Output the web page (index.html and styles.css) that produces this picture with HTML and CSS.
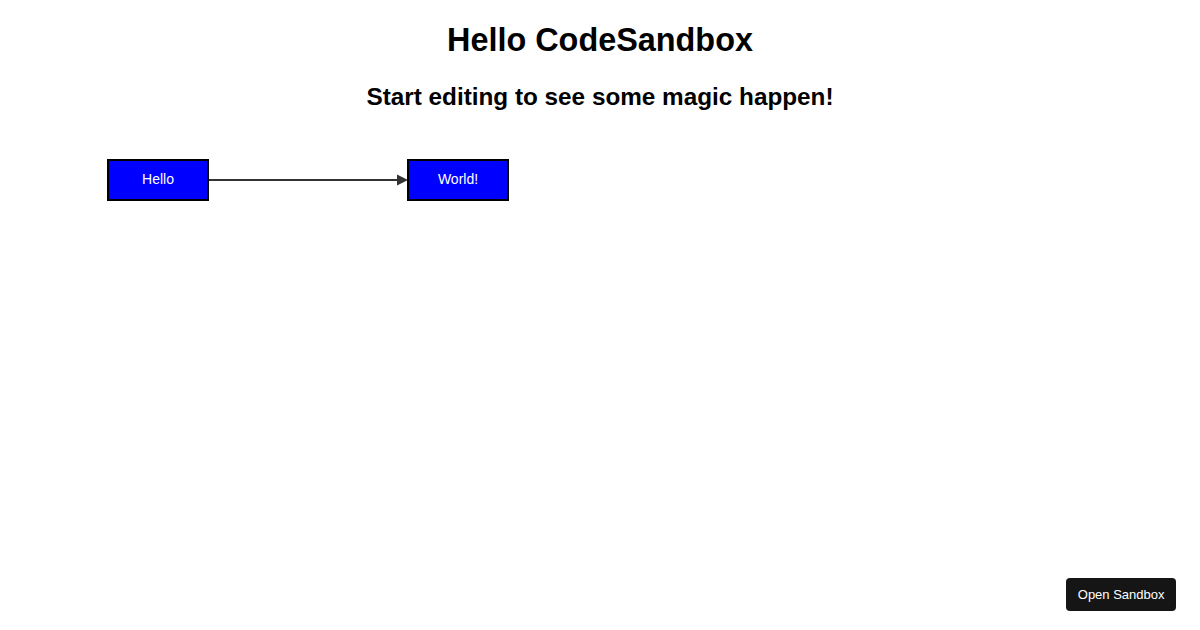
FILE: index.html
```html
<!DOCTYPE html>
<html>
<head>
<meta charset="utf-8">
<link rel="stylesheet" href="styles.css">
</head>
<body>
<div class="app">
  <h1 class="title">Hello CodeSandbox</h1>
  <h2 class="subtitle">Start editing to see some magic happen!</h2>
</div>
<svg class="diagram" width="1200" height="630" viewBox="0 0 1200 630">
  <line x1="209" y1="180" x2="399" y2="180" stroke="#333" stroke-width="2"/>
  <polygon points="397,174.5 408,180 397,185.5" fill="#333"/>
  <rect x="108" y="160" width="100" height="40" fill="#0000ff" stroke="#000" stroke-width="2"/>
  <text x="158" y="178.5" class="node-label">Hello</text>
  <rect x="408" y="160" width="100" height="40" fill="#0000ff" stroke="#000" stroke-width="2"/>
  <text x="458" y="178.5" class="node-label">World!</text>
</svg>
<a class="open-btn">Open Sandbox</a>
</body>
</html>
```
FILE: styles.css
```css
body {
  margin: 0;
  background: #fff;
  font-family: "Liberation Sans", Arial, sans-serif;
}
.app {
  text-align: center;
  color: #000;
  padding-top: 22px;
}
.title {
  font-size: 32.4px;
  margin: 0 0 23.5px;
}
.subtitle {
  font-size: 24.3px;
  margin: 0;
}
.diagram {
  position: absolute;
  left: 0;
  top: 0;
  pointer-events: none;
}
.node-label {
  fill: #fff;
  font-family: "Liberation Sans", Arial, sans-serif;
  font-size: 14px;
  text-anchor: middle;
  dominant-baseline: central;
}
.open-btn {
  position: fixed;
  right: 24px;
  bottom: 19px;
  height: 33px;
  line-height: 33px;
  padding: 0 11.5px;
  background: #151515;
  color: #fff;
  border-radius: 4px;
  font-family: "Liberation Sans", Arial, sans-serif;
  font-size: 13px;
  text-decoration: none;
}
```
